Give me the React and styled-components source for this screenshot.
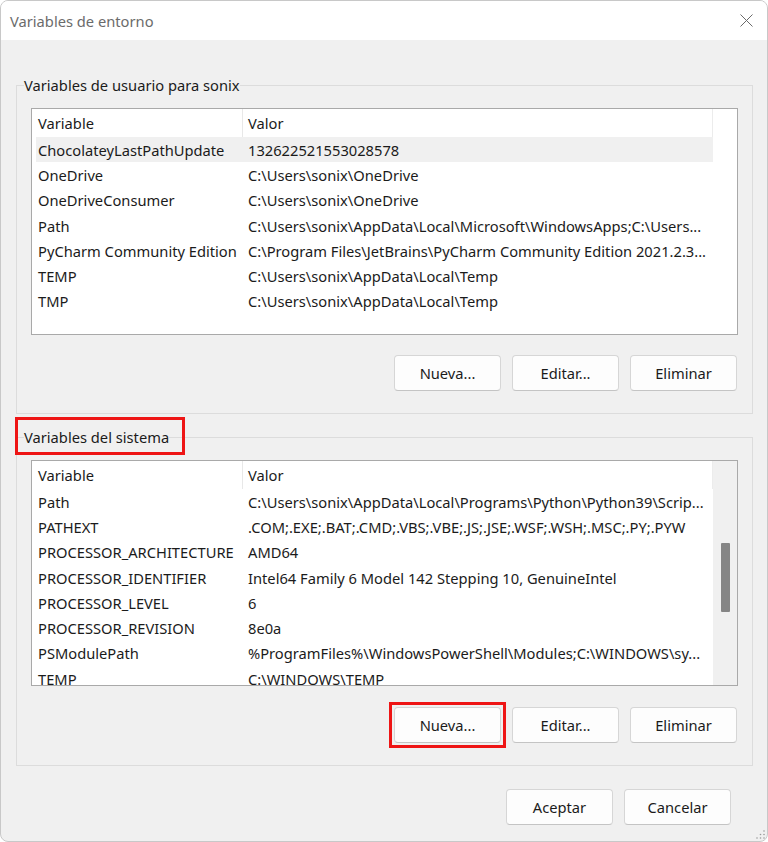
import React from "react";
import styled, { createGlobalStyle } from "styled-components";

const userVars = [
  ["ChocolateyLastPathUpdate", "132622521553028578"],
  ["OneDrive", "C:\\Users\\sonix\\OneDrive"],
  ["OneDriveConsumer", "C:\\Users\\sonix\\OneDrive"],
  ["Path", "C:\\Users\\sonix\\AppData\\Local\\Microsoft\\WindowsApps;C:\\Users..."],
  ["PyCharm Community Edition", "C:\\Program Files\\JetBrains\\PyCharm Community Edition 2021.2.3..."],
  ["TEMP", "C:\\Users\\sonix\\AppData\\Local\\Temp"],
  ["TMP", "C:\\Users\\sonix\\AppData\\Local\\Temp"],
];

const systemVars = [
  ["Path", "C:\\Users\\sonix\\AppData\\Local\\Programs\\Python\\Python39\\Scrip..."],
  ["PATHEXT", ".COM;.EXE;.BAT;.CMD;.VBS;.VBE;.JS;.JSE;.WSF;.WSH;.MSC;.PY;.PYW"],
  ["PROCESSOR_ARCHITECTURE", "AMD64"],
  ["PROCESSOR_IDENTIFIER", "Intel64 Family 6 Model 142 Stepping 10, GenuineIntel"],
  ["PROCESSOR_LEVEL", "6"],
  ["PROCESSOR_REVISION", "8e0a"],
  ["PSModulePath", "%ProgramFiles%\\WindowsPowerShell\\Modules;C:\\WINDOWS\\sy..."],
  ["TEMP", "C:\\WINDOWS\\TEMP"],
];

const VarList = ({ rows, height, selected, scrollbar }) => (
  <List $h={height}>
    <ListMain>
      <HeaderRow>
        <NameHead>Variable</NameHead>
        <ValueHead>Valor</ValueHead>
      </HeaderRow>
      {rows.map(([name, value], i) => (
        <Row key={name + i} $selected={i === selected}>
          <NameCell>{name}</NameCell>
          <ValueCell>{value}</ValueCell>
        </Row>
      ))}
    </ListMain>
    <Gutter $track={scrollbar}>{scrollbar && <Thumb />}</Gutter>
  </List>
);

export default function App() {
  return (
    <>
      <GlobalStyle />
      <Window>
        <TitleBar>
          <Title>Variables de entorno</Title>
          <CloseBox>
            <svg width="13" height="13" viewBox="0 0 13 13">
              <path d="M0.5 0.5 L12.5 12.5 M12.5 0.5 L0.5 12.5" stroke="#6a6a6a" strokeWidth="1" fill="none" />
            </svg>
          </CloseBox>
        </TitleBar>

        <Body>
          <Group>
            <Legend>Variables de usuario para sonix</Legend>
            <GroupInner>
              <VarList rows={userVars} height={227} selected={0} />
              <ButtonRow $top={20}>
                <Button>Nueva...</Button>
                <Button>Editar...</Button>
                <Button>Eliminar</Button>
              </ButtonRow>
            </GroupInner>
          </Group>

          <Group $gap>
            <Legend>
              <MarkedLabel>Variables del sistema</MarkedLabel>
            </Legend>
            <GroupInner>
              <VarList rows={systemVars} height={226} scrollbar />
              <ButtonRow $top={21}>
                <MarkedBox>
                  <Button>Nueva...</Button>
                </MarkedBox>
                <Button>Editar...</Button>
                <Button>Eliminar</Button>
              </ButtonRow>
            </GroupInner>
          </Group>

          <Footer>
            <Button>Aceptar</Button>
            <Button>Cancelar</Button>
          </Footer>
        </Body>

        <Grip>
          <svg width="9" height="9" viewBox="0 0 9 9">
            <circle cx="8" cy="1" r="0.8" fill="#9a9a9a" />
            <circle cx="8" cy="4.5" r="0.8" fill="#9a9a9a" />
            <circle cx="4.5" cy="4.5" r="0.8" fill="#9a9a9a" />
            <circle cx="8" cy="8" r="0.8" fill="#9a9a9a" />
            <circle cx="4.5" cy="8" r="0.8" fill="#9a9a9a" />
            <circle cx="1" cy="8" r="0.8" fill="#9a9a9a" />
          </svg>
        </Grip>
      </Window>
    </>
  );
}

const GlobalStyle = createGlobalStyle`
  html, body {
    margin: 0;
    padding: 0;
    background: #ffffff;
  }
  body {
    font-family: "Noto Sans", "Open Sans", sans-serif;
    font-size: 14.7px;
    color: #1b1b1b;
  }
  * {
    box-sizing: border-box;
  }
`;

const Window = styled.div`
  position: relative;
  width: 768px;
  height: 842px;
  border: 1px solid #c8c8c8;
  border-radius: 8px;
  overflow: hidden;
  background: #f0f0f0;
  display: flex;
  flex-direction: column;
`;

const TitleBar = styled.div`
  height: 39px;
  background: #ffffff;
  display: flex;
  align-items: center;
  justify-content: space-between;
  padding-left: 9px;
`;

const Title = styled.div`
  font-size: 14.7px;
  line-height: 20px;
  color: #6b6b6b;
`;

const CloseBox = styled.div`
  width: 42px;
  height: 39px;
  display: flex;
  align-items: center;
  justify-content: center;
`;

const Body = styled.div`
  flex: 1;
  display: flex;
  flex-direction: column;
  padding: 35px 14px 0 15px;
`;

const Group = styled.fieldset`
  margin: ${(p) => (p.$gap ? "13px" : "0")} 0 0 0;
  padding: 0;
  border: 1px solid #dcdcdc;
  min-width: 0;
`;

const Legend = styled.legend`
  margin-left: 7px;
  padding: 0;
  font-size: 14.7px;
  line-height: 20px;
  height: 20px;
  color: #1b1b1b;
`;

const MarkedLabel = styled.span`
  display: inline-block;
  line-height: 20px;
  padding: 7px 13px 5px 6px;
  margin: -7px -13px -5px -6px;
  outline: 3px solid #ee1515;
`;

const MarkedBox = styled.div`
  display: flex;
  padding: 2px;
  margin: -2px;
  outline: 3px solid #ee1515;
`;

const GroupInner = styled.div`
  padding: 13px 14px 22px 14px;
`;

const List = styled.div`
  height: ${(p) => p.$h}px;
  border: 1px solid #a9a9a9;
  background: #ffffff;
  display: flex;
  overflow: hidden;
`;

const ListMain = styled.div`
  flex: 1;
  min-width: 0;
  padding-left: 4px;
  display: flex;
  flex-direction: column;
  overflow: hidden;
`;

const HeaderRow = styled.div`
  flex: none;
  height: 28px;
  display: flex;
  align-items: center;
  border-right: 1px solid #ececec;
`;

const NameHead = styled.div`
  width: 207px;
  height: 100%;
  display: flex;
  align-items: center;
  padding-left: 2px;
  border-right: 1px solid #e8e8e8;
`;

const ValueHead = styled.div`
  padding-left: 5px;
`;

const Row = styled.div`
  flex: none;
  height: 25.3px;
  display: flex;
  align-items: center;
  background: ${(p) => (p.$selected ? "#f0f0f0" : "transparent")};
`;

const NameCell = styled.div`
  width: 207px;
  flex: none;
  padding-left: 2px;
  white-space: nowrap;
  overflow: hidden;
`;

const ValueCell = styled.div`
  flex: 1;
  min-width: 0;
  padding-left: 5px;
  white-space: nowrap;
  overflow: hidden;
`;

const Gutter = styled.div`
  width: 24px;
  flex: none;
  background: ${(p) => (p.$track ? "#f0f0f0" : "#ffffff")};
  display: flex;
  flex-direction: column;
  align-items: center;
`;

const Thumb = styled.div`
  margin-top: 82px;
  width: 9px;
  height: 69px;
  background: #858585;
  border-radius: 1px;
`;

const ButtonRow = styled.div`
  display: flex;
  justify-content: flex-end;
  align-items: center;
  gap: 11px;
  margin-top: ${(p) => p.$top}px;
  padding-right: 1px;
`;

const Button = styled.button`
  width: 107px;
  height: 36px;
  border: 1px solid #d6d6d6;
  border-bottom-color: #c4c4c4;
  border-radius: 4px;
  background: #fdfdfd;
  font-family: "Noto Sans", "Open Sans", sans-serif;
  font-size: 14.7px;
  color: #1b1b1b;
  padding: 0;
`;

const Footer = styled.div`
  display: flex;
  justify-content: flex-end;
  gap: 11px;
  margin-top: 23px;
  padding-right: 22px;
`;

const Grip = styled.div`
  position: absolute;
  right: 2px;
  bottom: 2px;
  line-height: 0;
`;
